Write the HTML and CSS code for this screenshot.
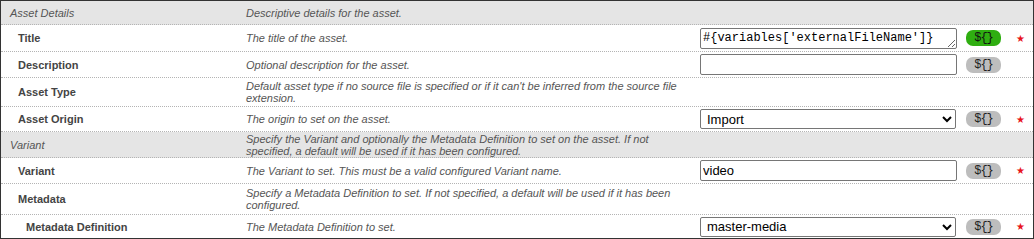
FILE: index.html
```html
<!DOCTYPE html>
<html>
<head>
<meta charset="utf-8">
<link rel="stylesheet" href="styles.css">
</head>
<body>
<div class="panel">
  <div class="row section h24">
    <div class="sec-label">Asset Details</div>
    <div class="desc">Descriptive details for the asset.</div>
    <div></div><div></div><div></div>
  </div>
  <div class="row h27">
    <div class="label">Title</div>
    <div class="desc">The title of the asset.</div>
    <div class="field"><textarea class="ta">#{variables['externalFileName']}</textarea></div>
    <div class="btncell"><span class="expr on">${}</span></div>
    <div class="req">★</div>
  </div>
  <div class="row h26">
    <div class="label">Description</div>
    <div class="desc">Optional description for the asset.</div>
    <div class="field"><input class="inp" type="text" value=""></div>
    <div class="btncell"><span class="expr">${}</span></div>
    <div></div>
  </div>
  <div class="row h29">
    <div class="label">Asset Type</div>
    <div class="desc">Default asset type if no source file is specified or if it can't be inferred from the source file extension.</div>
    <div></div><div></div><div></div>
  </div>
  <div class="row h25">
    <div class="label">Asset Origin</div>
    <div class="desc">The origin to set on the asset.</div>
    <div class="field"><select class="sel"><option>Import</option></select></div>
    <div class="btncell"><span class="expr">${}</span></div>
    <div class="req">★</div>
  </div>
  <div class="row section h26">
    <div class="sec-label">Variant</div>
    <div class="desc">Specify the Variant and optionally the Metadata Definition to set on the asset. If not specified, a default will be used if it has been configured.</div>
    <div></div><div></div><div></div>
  </div>
  <div class="row h26">
    <div class="label">Variant</div>
    <div class="desc">The Variant to set. This must be a valid configured Variant name.</div>
    <div class="field"><input class="inp" type="text" value="video"></div>
    <div class="btncell"><span class="expr">${}</span></div>
    <div class="req">★</div>
  </div>
  <div class="row h31">
    <div class="label">Metadata</div>
    <div class="desc">Specify a Metadata Definition to set. If not specified, a default will be used if it has been configured.</div>
    <div></div><div></div><div></div>
  </div>
  <div class="row h23 last">
    <div class="label sub">Metadata Definition</div>
    <div class="desc">The Metadata Definition to set.</div>
    <div class="field"><select class="sel"><option>master-media</option></select></div>
    <div class="btncell"><span class="expr">${}</span></div>
    <div class="req">★</div>
  </div>
</div>
</body>
</html>
```

FILE: styles.css
```css
html, body {
  margin: 0;
  padding: 0;
  background: #fff;
}
.panel {
  box-sizing: border-box;
  width: 1034px;
  height: 239px;
  border: 1px solid #333;
  font-family: "Liberation Sans", Arial, sans-serif;
  font-size: 11px;
  color: #444;
  overflow: hidden;
}
.row {
  display: grid;
  grid-template-columns: 245px 454px 257px 44px 1fr;
  align-items: center;
  border-bottom: 1px dotted #b4b4b4;
  box-sizing: border-box;
}
.row.last { border-bottom: none; }
.h23 { height: 23px; }
.h24 { height: 24px; }
.h25 { height: 25px; }
.h26 { height: 26px; }
.h27 { height: 27px; }
.h29 { height: 29px; }
.h31 { height: 31px; }
.section {
  background: #e5e5e5;
}
.sec-label {
  padding-left: 9px;
  font-style: italic;
  color: #555;
}
.label {
  padding-left: 17px;
  font-weight: bold;
  color: #444;
}
.label.sub { padding-left: 25px; }
.desc {
  font-style: italic;
  color: #555;
  line-height: 12px;
  padding-right: 12px;
}
.field {
  display: flex;
}
.ta {
  box-sizing: border-box;
  width: 257px;
  height: 21px;
  margin: 0;
  padding: 1px 2px;
  border: 1px solid #767676;
  border-radius: 2px;
  font-family: "Liberation Mono", "DejaVu Sans Mono", monospace;
  font-size: 12px;
  line-height: 16px;
  color: #000;
  overflow: hidden;
  white-space: nowrap;
}
.inp {
  box-sizing: border-box;
  width: 257px;
  height: 21px;
  margin: 0;
  padding: 1px 2px;
  border: 1px solid #767676;
  border-radius: 2px;
  font-family: "Liberation Sans", Arial, sans-serif;
  font-size: 13px;
  color: #000;
}
.sel {
  box-sizing: border-box;
  width: 256px;
  height: 20px;
  margin: 0;
  padding: 0 2px;
  border: 1px solid #767676;
  border-radius: 2px;
  background: #fff;
  font-family: "Liberation Sans", Arial, sans-serif;
  font-size: 13px;
  color: #000;
}
.btncell {
  padding-left: 9px;
  display: flex;
}
.expr {
  display: flex;
  align-items: center;
  justify-content: center;
  width: 35px;
  height: 16px;
  border-radius: 7px;
  background: #bdbdbd;
  font-family: "Liberation Mono", "DejaVu Sans Mono", monospace;
  font-size: 12px;
  letter-spacing: -1px;
  color: #222;
}
.expr.on {
  background: #2fae11;
  color: #111;
}
.req {
  padding-left: 15px;
  color: #e8141c;
  font-size: 10px;
}
```
